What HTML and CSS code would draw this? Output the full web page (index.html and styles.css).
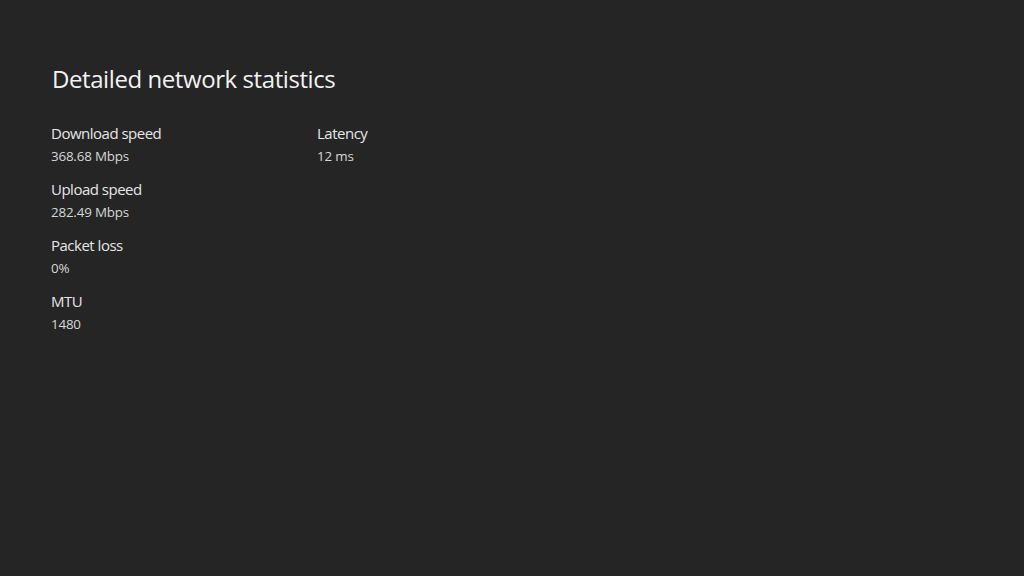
FILE: index.html
```html
<!DOCTYPE html>
<html>
<head>
<meta charset="utf-8">
<link rel="stylesheet" href="styles.css">
</head>
<body>
<main class="page">
  <h1 class="title">Detailed network statistics</h1>
  <div class="columns">
    <div class="col">
      <div class="stat"><div class="label">Download speed</div><div class="value">368.68 Mbps</div></div>
      <div class="stat"><div class="label">Upload speed</div><div class="value">282.49 Mbps</div></div>
      <div class="stat"><div class="label">Packet loss</div><div class="value">0%</div></div>
      <div class="stat"><div class="label">MTU</div><div class="value">1480</div></div>
    </div>
    <div class="col">
      <div class="stat"><div class="label">Latency</div><div class="value">12 ms</div></div>
    </div>
  </div>
</main>
</body>
</html>
```
FILE: styles.css
```css
html, body {
  margin: 0;
  padding: 0;
  background: #252525;
  width: 1024px;
  height: 576px;
  overflow: hidden;
}
.page {
  padding: 63px 0 0 51px;
  font-family: "Open Sans", "Noto Sans", sans-serif;
  color: #ededed;
}
.title {
  margin: 0 0 0 1px;
  font-size: 24px;
  font-weight: 400;
  line-height: 32px;
  color: #f2f2f2;
  letter-spacing: -0.42px;
}
.columns {
  display: flex;
  margin-top: 27px;
}
.col {
  width: 266px;
  display: flex;
  flex-direction: column;
  gap: 10px;
}
.stat {
  display: flex;
  flex-direction: column;
}
.label {
  font-size: 15px;
  line-height: 22px;
  color: #e6e6e6;
  letter-spacing: -0.5px;
}
.value {
  font-size: 13.4px;
  line-height: 24px;
  color: #d6d6d6;
  letter-spacing: -0.2px;
}
```
